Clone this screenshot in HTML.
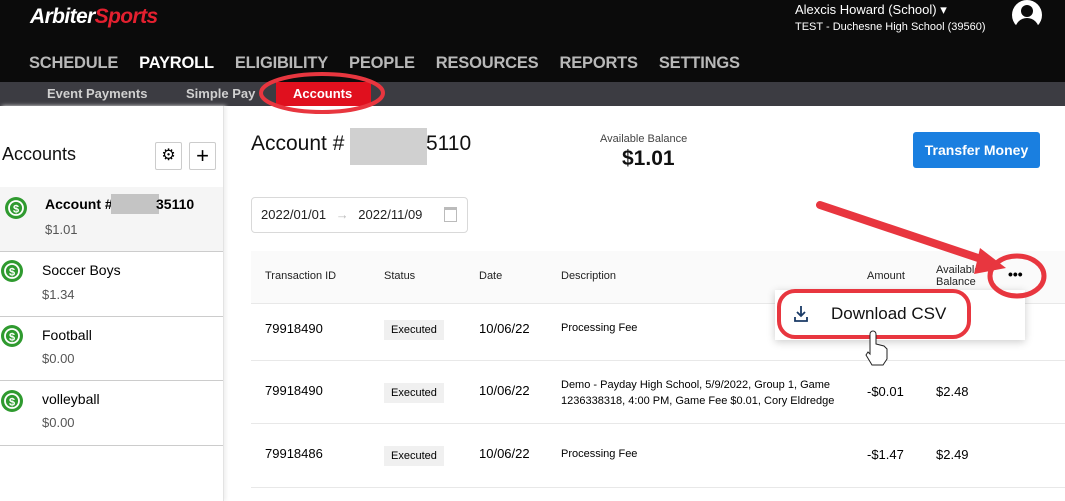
<!DOCTYPE html><html><head><style>
body{margin:0;width:1065px;height:501px;overflow:hidden;font-family:"Liberation Sans",sans-serif;background:#fff;position:relative}
.a{position:absolute}
.nav span{margin-right:21px}
</style></head><body>
<div class="a" style="left:0;top:0;width:1065px;height:82px;background:#0b0b0b"></div>
<div class="a" style="left:30px;top:5px;font-size:21px;font-weight:bold;font-style:italic;color:#fff;letter-spacing:-0.6px">Arbiter<span style="color:#e3202f">Sports</span></div>
<div class="a" style="left:795px;top:2px;color:#fff;font-size:13px">Alexcis Howard (School) &#9662;</div>
<div class="a" style="left:795px;top:21px;color:#fff;font-size:11px">TEST - Duchesne High School (39560)</div>
<div class="a" style="left:1012px;top:0;width:30px;height:30px;border-radius:50%;background:#fff"></div>
<div class="a" style="left:1021px;top:5px;width:12px;height:12px;border-radius:50%;background:#0b0b0b"></div>
<div class="a" style="left:1015px;top:18px;width:24px;height:14px;border-radius:12px 12px 0 0;background:#0b0b0b"></div>
<div class="a nav" style="left:29px;top:54px;font-size:16.5px;font-weight:bold;color:#b8b8b8;letter-spacing:-0.2px"><span>SCHEDULE</span><span style="color:#fff">PAYROLL</span><span>ELIGIBILITY</span><span>PEOPLE</span><span>RESOURCES</span><span>REPORTS</span><span>SETTINGS</span></div>
<div class="a" style="left:0;top:82px;width:1065px;height:24px;background:#3c3c42"></div>
<div class="a" style="left:47px;top:86px;font-size:13px;font-weight:bold;color:#d0d0d0">Event Payments</div>
<div class="a" style="left:186px;top:86px;font-size:13px;font-weight:bold;color:#d0d0d0">Simple Pay</div>
<div class="a" style="left:276px;top:82px;width:95px;height:24px;background:#e0101e"></div>
<div class="a" style="left:293px;top:86px;font-size:13px;font-weight:bold;color:#fff">Accounts</div>
<div class="a" style="left:0;top:106px;width:223px;height:395px;border-right:1px solid #e3e3e3;box-shadow:2px 0 4px #eee"></div>
<div class="a" style="left:2px;top:144px;font-size:18px;color:#111">Accounts</div>
<div class="a" style="left:155px;top:142px;width:25px;height:26px;border:1px solid #ccc;border-radius:2px;text-align:center;font-size:16px;line-height:26px">&#9881;</div>
<div class="a" style="left:189px;top:142px;width:25px;height:26px;border:1px solid #ccc;border-radius:2px;text-align:center;font-size:22px;line-height:25px">+</div>
<div class="a" style="left:0;top:187px;width:223px;height:64px;background:#f5f5f5"></div>
<div class="a" style="left:0;top:251px;width:223px;border-top:1px solid #ccc"></div>
<div class="a" style="left:0;top:316px;width:223px;border-top:1px solid #ccc"></div>
<div class="a" style="left:0;top:380px;width:223px;border-top:1px solid #ccc"></div>
<div class="a" style="left:0;top:445px;width:223px;border-top:1px solid #ccc"></div>
<div class="a" style="left:45px;top:196px;font-size:14px;font-weight:bold">Account #</div>
<div class="a" style="left:111px;top:194px;width:48px;height:20px;background:#c4c4c4"></div>
<div class="a" style="left:156px;top:196px;font-size:14px;font-weight:bold">35110</div>
<div class="a" style="left:45px;top:222px;font-size:13px;color:#555">$1.01</div>
<div class="a" style="left:42px;top:262px;font-size:14px">Soccer Boys</div><div class="a" style="left:42px;top:287px;font-size:13px;color:#555">$1.34</div>
<div class="a" style="left:42px;top:327px;font-size:14px">Football</div><div class="a" style="left:42px;top:351px;font-size:13px;color:#555">$0.00</div>
<div class="a" style="left:42px;top:391px;font-size:14px">volleyball</div><div class="a" style="left:42px;top:415px;font-size:13px;color:#555">$0.00</div>
<svg class="a" style="left:0;top:0" width="40" height="420">
<g font-family="Liberation Sans" font-size="13" font-weight="bold" text-anchor="middle" fill="none">
<g transform="translate(16,208)"><circle r="11" fill="#2f9a2f"/><circle r="7" stroke="#fff" stroke-width="1.8"/><text y="4.5" fill="#fff" font-size="11">$</text></g>
<g transform="translate(12,271)"><circle r="11" fill="#2f9a2f"/><circle r="7" stroke="#fff" stroke-width="1.8"/><text y="4.5" fill="#fff" font-size="11">$</text></g>
<g transform="translate(12,336)"><circle r="11" fill="#2f9a2f"/><circle r="7" stroke="#fff" stroke-width="1.8"/><text y="4.5" fill="#fff" font-size="11">$</text></g>
<g transform="translate(12,401)"><circle r="11" fill="#2f9a2f"/><circle r="7" stroke="#fff" stroke-width="1.8"/><text y="4.5" fill="#fff" font-size="11">$</text></g>
</g></svg>
<div class="a" style="left:251px;top:132px;font-size:21px;color:#111">Account #</div>
<div class="a" style="left:350px;top:128px;width:77px;height:37px;background:#d0d0d0"></div>
<div class="a" style="left:426px;top:132px;font-size:21px;color:#111">5110</div>
<div class="a" style="left:600px;top:133px;font-size:11px;color:#444">Available Balance</div>
<div class="a" style="left:622px;top:147px;font-size:21px;font-weight:bold;color:#111">$1.01</div>
<div class="a" style="left:913px;top:132px;width:127px;height:36px;background:#1a7fe0;border-radius:3px;color:#fff;font-size:14px;font-weight:bold;text-align:center;line-height:36px">Transfer Money</div>
<div class="a" style="left:251px;top:197px;width:215px;height:34px;border:1px solid #d9d9d9;border-radius:4px"></div>
<div class="a" style="left:261px;top:207px;font-size:13px;color:#222">2022/01/01 <span style="color:#bbb;margin:0 6px">&rarr;</span> 2022/11/09</div>
<div class="a" style="left:444px;top:207px;width:11px;height:11px;border:1px solid #bbb;border-top-width:3px"></div>
<div class="a" style="left:251px;top:251px;width:814px;height:52px;background:#fafafa;border-bottom:1px solid #e8e8e8"></div>
<div class="a" style="left:265px;top:270px;font-size:11px;color:#222">Transaction ID</div>
<div class="a" style="left:384px;top:270px;font-size:11px;color:#222">Status</div>
<div class="a" style="left:479px;top:270px;font-size:11px;color:#222">Date</div>
<div class="a" style="left:561px;top:270px;font-size:11px;color:#222">Description</div>
<div class="a" style="left:867px;top:270px;font-size:11px;color:#222">Amount</div>
<div class="a" style="left:936px;top:264px;font-size:11px;color:#222;line-height:12px">Available<br>Balance</div>
<div class="a" style="left:1008px;top:266px;font-size:14px;font-weight:bold">&bull;&bull;&bull;</div>
<div class="a" style="left:251px;top:360px;width:814px;border-top:1px solid #e8e8e8"></div>
<div class="a" style="left:251px;top:423px;width:814px;border-top:1px solid #e8e8e8"></div>
<div class="a" style="left:251px;top:487px;width:814px;border-top:1px solid #e8e8e8"></div>
<div class="a" style="left:265px;top:321px;font-size:13px">79918490</div>
<div class="a" style="left:384px;top:320px;background:#f0f0f0;padding:4px 7px;font-size:11px">Executed</div>
<div class="a" style="left:479px;top:321px;font-size:13px">10/06/22</div>
<div class="a" style="left:561px;top:322px;font-size:11px">Processing Fee</div>
<div class="a" style="left:265px;top:383px;font-size:13px">79918490</div>
<div class="a" style="left:384px;top:383px;background:#f0f0f0;padding:4px 7px;font-size:11px">Executed</div>
<div class="a" style="left:479px;top:383px;font-size:13px">10/06/22</div>
<div class="a" style="left:561px;top:377px;font-size:11px;line-height:16px">Demo - Payday High School, 5/9/2022, Group 1, Game<br>1236338318, 4:00 PM, Game Fee $0.01, Cory Eldredge</div>
<div class="a" style="left:867px;top:384px;font-size:13px">-$0.01</div>
<div class="a" style="left:936px;top:384px;font-size:13px">$2.48</div>
<div class="a" style="left:265px;top:446px;font-size:13px">79918486</div>
<div class="a" style="left:384px;top:446px;background:#f0f0f0;padding:4px 7px;font-size:11px">Executed</div>
<div class="a" style="left:479px;top:446px;font-size:13px">10/06/22</div>
<div class="a" style="left:561px;top:448px;font-size:11px">Processing Fee</div>
<div class="a" style="left:867px;top:447px;font-size:13px">-$1.47</div>
<div class="a" style="left:936px;top:447px;font-size:13px">$2.49</div>
<div class="a" style="left:775px;top:290px;width:250px;height:50px;background:#fff;box-shadow:0 2px 8px rgba(0,0,0,.2)"></div>
<div class="a" style="left:831px;top:304px;font-size:17px;color:#111">Download CSV</div>
<svg class="a" style="left:0;top:0" width="1065" height="501">
<path d="M801 306v10m-4-4l4 4 4-4M795 317v4h12v-4" stroke="#1a3a66" stroke-width="1.8" fill="none"/>
<ellipse cx="322" cy="93" rx="61" ry="19" fill="none" stroke="#e8363f" stroke-width="4"/>
<line x1="820" y1="205" x2="990" y2="262" stroke="#e8363f" stroke-width="8" stroke-linecap="round"/>
<path d="M980 248l26 20-32 6z" fill="#e8363f"/>
<ellipse cx="1017" cy="276" rx="27" ry="20" fill="none" stroke="#e8363f" stroke-width="5"/>
<rect x="779" y="291" width="190" height="46" rx="16" fill="none" stroke="#e8363f" stroke-width="4"/>
<path d="M870 352v-18a3 3 0 016 0v10l8 2 3 3v10l-4 6h-11l-6-10 2-3 2 2z" fill="#fff" stroke="#222" stroke-width="1"/>
</svg>
</body></html>
